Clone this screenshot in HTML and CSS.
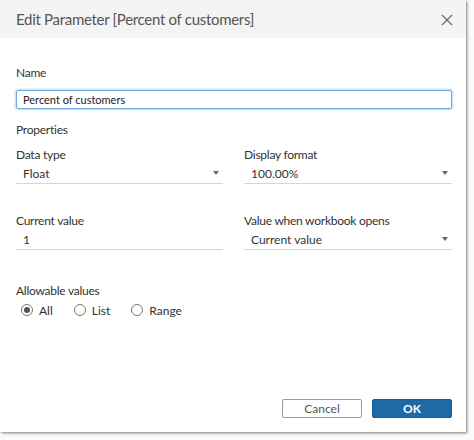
FILE: index.html
```html
<!DOCTYPE html>
<html>
<head>
<meta charset="utf-8">
<link rel="stylesheet" href="styles.css">
</head>
<body>
<div class="backdrop">
  <div class="dialog">
    <div class="header">
      <span class="title">Edit Parameter [Percent of customers]</span>
      <svg class="close" width="12" height="12" viewBox="0 0 12 12"><path d="M1 1L11 11M11 1L1 11" stroke="#6b6b6b" stroke-width="1.2" fill="none"/></svg>
    </div>
    <div class="body">
      <div class="label name-label">Name</div>
      <div class="text-input">Percent of customers</div>
      <div class="label section">Properties</div>
      <div class="grid">
        <div class="field">
          <div class="label">Data type</div>
          <div class="select"><span>Float</span><span class="arrow"></span></div>
        </div>
        <div class="field">
          <div class="label">Display format</div>
          <div class="select"><span>100.00%</span><span class="arrow"></span></div>
        </div>
        <div class="field row2">
          <div class="label">Current value</div>
          <div class="select"><span>1</span></div>
        </div>
        <div class="field row2">
          <div class="label">Value when workbook opens</div>
          <div class="select"><span>Current value</span><span class="arrow"></span></div>
        </div>
      </div>
      <div class="label allow">Allowable values</div>
      <div class="radios">
        <div class="radio"><span class="circle checked"></span><span>All</span></div>
        <div class="radio"><span class="circle"></span><span>List</span></div>
        <div class="radio"><span class="circle"></span><span>Range</span></div>
      </div>
    </div>
    <div class="footer">
      <div class="btn cancel">Cancel</div>
      <div class="btn ok">OK</div>
    </div>
  </div>
</div>
</body>
</html>
```

FILE: styles.css
```css
html, body {
  margin: 0;
  padding: 0;
  background: #ffffff;
  font-family: Lato, "Open Sans", sans-serif;
  color: #333;
}
.backdrop {
  width: 474px;
  height: 440px;
  background-color: #fbfbfb;
  background-image: linear-gradient(to right, transparent 62px, #e4e4e4 62px, #e4e4e4 63px, transparent 63px);
  background-size: 54px 100%;
  background-position: 1px 0;
  overflow: hidden;
}
.dialog {
  width: 466px;
  height: 432px;
  background: #fff;
  box-shadow: 1px 1px 2px rgba(0,0,0,0.35), 2px 2px 3px rgba(0,0,0,0.15);
  display: flex;
  flex-direction: column;
}
.header {
  height: 38px;
  background: #f4f4f4;
  display: flex;
  align-items: center;
  justify-content: space-between;
  padding: 0 13px 0 16px;
}
.title {
  font-size: 15px;
  color: #555;
  letter-spacing: -0.3px;
}
.close {
  margin-top: 1px;
}
.body {
  flex: 1;
  padding: 27px 14px 0 16px;
  display: flex;
  flex-direction: column;
}
.label {
  font-size: 12px;
  line-height: 16px;
  letter-spacing: -0.25px;
  color: #333;
}
.text-input {
  margin-top: 9px;
  height: 19px;
  box-sizing: border-box;
  border: 1px solid #6fa8dc;
  border-radius: 2px;
  box-shadow: 0 0 2px 1px rgba(111,168,220,0.45);
  font-size: 11px;
  line-height: 17px;
  padding-left: 6px;
  color: #222;
}
.section {
  margin-top: 13px;
}
.grid {
  display: grid;
  grid-template-columns: 207px 208px;
  column-gap: 21px;
  margin-top: 9px;
}
.row2 {
  margin-top: 29px;
}
.select {
  height: 21px;
  box-sizing: border-box;
  border-bottom: 1px solid #d6d6d6;
  display: flex;
  align-items: center;
  justify-content: space-between;
  padding: 0 4px 0 7px;
  font-size: 12px;
  color: #333;
}
.arrow {
  width: 0;
  height: 0;
  border-left: 3.5px solid transparent;
  border-right: 3.5px solid transparent;
  border-top: 4px solid #666;
}
.allow {
  margin-top: 33px;
}
.radios {
  display: flex;
  margin-top: 3px;
  padding-left: 5px;
  height: 16px;
  align-items: center;
  font-size: 12px;
}
.radio {
  display: flex;
  align-items: center;
  gap: 6px;
  margin-right: 21px;
}
.circle {
  width: 12px;
  height: 12px;
  box-sizing: border-box;
  border: 1px solid #777;
  border-radius: 50%;
  display: flex;
  align-items: center;
  justify-content: center;
}
.circle.checked::after {
  content: "";
  width: 6px;
  height: 6px;
  border-radius: 50%;
  background: #555;
}
.footer {
  display: flex;
  justify-content: flex-end;
  gap: 10px;
  padding: 0 14px 14px 0;
}
.btn {
  width: 80px;
  height: 19px;
  box-sizing: border-box;
  font-size: 12px;
  line-height: 17px;
  text-align: center;
  border-radius: 2px;
}
.cancel {
  border: 1px solid #9a9a9a;
  color: #555;
  background: #fff;
}
.ok {
  background: #1f6aa5;
  border: 1px solid #1a5f96;
  color: #fff;
  font-weight: bold;
}
```
